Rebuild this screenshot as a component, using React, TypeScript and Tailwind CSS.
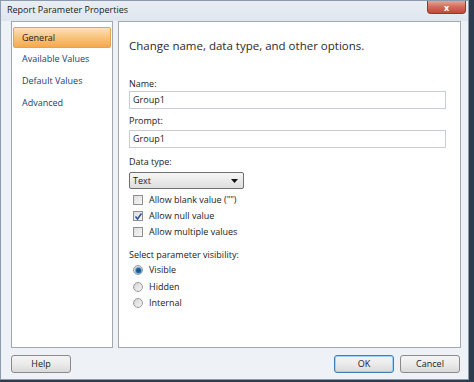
import React from "react";

const font = { fontFamily: '"Open Sans", "Noto Sans", sans-serif' };

function Checkbox({ checked }: { checked?: boolean }) {
  return (
    <span className="relative flex h-[10px] w-[10px] items-center justify-center border border-[#8f8f8f] bg-gradient-to-br from-[#dcdcdc] to-[#f8f8f8]">
      {checked && (
        <svg width="9" height="9" viewBox="0 0 9 9" className="absolute">
          <path d="M1.5 4.5 L3.5 7 L7.5 1.5" fill="none" stroke="#2a4f9c" strokeWidth="1.5" />
        </svg>
      )}
    </span>
  );
}

function Radio({ checked }: { checked?: boolean }) {
  return (
    <span className="flex h-[10px] w-[10px] items-center justify-center rounded-full border border-[#9a9a9a] bg-gradient-to-br from-[#d4d4d4] to-[#f6f6f6]">
      {checked && <span className="h-[5px] w-[5px] rounded-full bg-[#1f5a8a] shadow-[0_0_0_1px_#6fa8d8]" />}
    </span>
  );
}

function Button({ children, focused }: { children: React.ReactNode; focused?: boolean }) {
  return (
    <div
      className={`flex h-[18px] w-[60px] items-center justify-center rounded-[3px] border bg-gradient-to-b from-[#f4f4f4] via-[#ebebeb] to-[#d9d9d9] text-[9px] text-[#1a1a1a] ${
        focused ? "border-[#3c7fb1] shadow-[inset_0_0_0_1px_#9fd2f0]" : "border-[#8a8a8a]"
      }`}
    >
      {children}
    </div>
  );
}

export default function App() {
  return (
    <div className="flex h-[382px] w-[474px] bg-[#2c3b4d]" style={font}>
      <div className="flex h-[380px] w-[469px] flex-col border border-[#8a99ab] bg-[#eef1f5]">
        {/* title bar */}
        <div className="flex h-[20px] items-start justify-between bg-gradient-to-b from-[#e9eef4] to-[#dfe6ee] pl-[6px] pr-[2px]">
          <span className="pt-[3px] text-[9px] leading-[12px] text-[#1a1a1a]">Report Parameter Properties</span>
          <div className="flex h-[13px] w-[39px] items-center justify-center rounded-b-[4px] border border-t-0 border-[#8c3a32] bg-gradient-to-b from-[#e6a498] via-[#d06a5a] to-[#c04a3a]">
            <span className="text-[9px] font-bold leading-none text-white">x</span>
          </div>
        </div>
        {/* body */}
        <div className="flex h-[327px] gap-[5px] pl-[10px] pr-[7px]">
          <div className="flex w-[102px] flex-col border border-[#a3a8ae] bg-white px-[1px] pt-[5px] text-[9px]">
            <div className="flex h-[21px] items-center rounded-[2px] border border-[#e7a24b] bg-gradient-to-b from-[#fde2bb] via-[#f9c37c] to-[#f6a94b] pl-[8px] text-[#222]">
              General
            </div>
            <div className="flex h-[22px] items-center pl-[9px] text-[#223c75]">Available Values</div>
            <div className="flex h-[22px] items-center pl-[9px] text-[#223c75]">Default Values</div>
            <div className="flex h-[22px] items-center pl-[9px] text-[#223c75]">Advanced</div>
          </div>
          <div className="flex flex-1 flex-col border border-[#a3a8ae] bg-white pl-[10px] pr-[14px] text-[9px] text-[#1a1a1a]">
            <div className="pt-[14px] text-[11.5px] leading-[20px] text-[#2a2a2a]">Change name, data type, and other options.</div>
            <div className="mt-[22px] leading-[12px]">Name:</div>
            <div className="mt-[1px] flex h-[18px] items-center border border-[#c9cdd3] pl-[3px]">Group1</div>
            <div className="mt-[6px] leading-[12px]">Prompt:</div>
            <div className="mt-[3px] flex h-[18px] items-center border border-[#c9cdd3] pl-[3px]">Group1</div>
            <div className="mt-[8px] leading-[12px]">Data type:</div>
            <div className="mt-[4px] flex h-[17px] w-[115px] items-center justify-between rounded-[2px] border border-[#707070] bg-gradient-to-b from-[#f6f6f6] to-[#dedede] pl-[3px] pr-[5px]">
              <span>Text</span>
              <svg width="7" height="4" viewBox="0 0 7 4">
                <path d="M0 0 H7 L3.5 4 Z" fill="#111" />
              </svg>
            </div>
            <div className="mt-[6px] flex flex-col gap-[6px] pl-[4px]">
              <div className="flex h-[10px] items-center gap-[6px]">
                <Checkbox />
                <span>Allow blank value ("")</span>
              </div>
              <div className="flex h-[10px] items-center gap-[6px]">
                <Checkbox checked />
                <span>Allow null value</span>
              </div>
              <div className="flex h-[10px] items-center gap-[6px]">
                <Checkbox />
                <span>Allow multiple values</span>
              </div>
            </div>
            <div className="mt-[12px] leading-[12px]">Select parameter visibility:</div>
            <div className="mt-[4px] flex flex-col gap-[6.5px] pl-[4px]">
              <div className="flex h-[10px] items-center gap-[6px]">
                <Radio checked />
                <span>Visible</span>
              </div>
              <div className="flex h-[10px] items-center gap-[6px]">
                <Radio />
                <span>Hidden</span>
              </div>
              <div className="flex h-[10px] items-center gap-[6px]">
                <Radio />
                <span>Internal</span>
              </div>
            </div>
          </div>
        </div>
        {/* footer */}
        <div className="flex items-start justify-between pl-[10px] pr-[8px] pt-[7px]">
          <Button>Help</Button>
          <div className="flex gap-[6px]">
            <Button focused>OK</Button>
            <Button>Cancel</Button>
          </div>
        </div>
      </div>
    </div>
  );
}
